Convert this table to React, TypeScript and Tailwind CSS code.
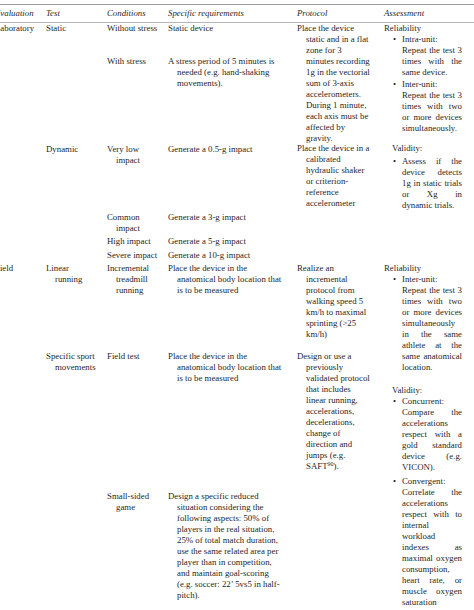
import React from "react";

const GRID = "grid grid-cols-[51px_61px_61px_129px_87px_90px]";

// cell with hanging indent: first line flush, the rest indented
function Cell({ lines, className = "" }: { lines: React.ReactNode[]; className?: string }) {
  return (
    <div className={className}>
      {lines.map((l, i) => (
        <div key={i} className={i === 0 ? "whitespace-nowrap" : "whitespace-nowrap pl-[9px]"}>
          {l}
        </div>
      ))}
    </div>
  );
}

// a line of the assessment column; "j" lines are spread edge to edge
function JLine({ text, j }: { text: string; j?: boolean }) {
  if (!j) return <div className="whitespace-nowrap">{text}</div>;
  return (
    <div className="flex justify-between whitespace-nowrap">
      {text.split(" ").map((w, i) => (
        <span key={i}>{w}</span>
      ))}
    </div>
  );
}

type L = [string, boolean?];

function Bullet({ lines, className = "" }: { lines: L[]; className?: string }) {
  return (
    <div className={"flex " + className}>
      <span className="w-[18px] pl-[9px] flex-none">•</span>
      <div className="w-[60px] flex-none">
        {lines.map(([t, j], i) => (
          <JLine key={i} text={t} j={j} />
        ))}
      </div>
    </div>
  );
}

export default function App() {
  return (
    <div className="w-[474px] h-[610px] overflow-hidden bg-white text-[#1f1f1f] text-[8.8px] leading-[11px] font-['Liberation_Serif','Times_New_Roman',serif]">
      <div className="ml-[-5px] w-[479px] pt-[4px]">
        {/* Header */}
        <div className="border-t-[1.5px] border-b border-t-[#9a9a9a] border-b-[#b5b5b5]">
          <div className={GRID + " italic pt-[3px] pb-[2.5px]"}>
            <div>Evaluation</div>
            <div>Test</div>
            <div>Conditions</div>
            <div>Specific requirements</div>
            <div>Protocol</div>
            <div>Assessment</div>
          </div>
        </div>

        {/* Body */}
        <div className={GRID + " grid-rows-[33.5px_88px_68px_24px_14px_13px_88px_140px_auto]"}>
          {/* Evaluation */}
          <Cell className="col-start-1 row-start-1" lines={["Laboratory"]} />
          <Cell className="col-start-1 row-start-7" lines={["Field"]} />

          {/* Test */}
          <Cell className="col-start-2 row-start-1" lines={["Static"]} />
          <Cell className="col-start-2 row-start-3" lines={["Dynamic"]} />
          <Cell className="col-start-2 row-start-7" lines={["Linear", "running"]} />
          <Cell className="col-start-2 row-start-8" lines={["Specific sport", "movements"]} />

          {/* Conditions */}
          <Cell className="col-start-3 row-start-1" lines={["Without stress"]} />
          <Cell className="col-start-3 row-start-2" lines={["With stress"]} />
          <Cell className="col-start-3 row-start-3" lines={["Very low", "impact"]} />
          <Cell className="col-start-3 row-start-4" lines={["Common", "impact"]} />
          <Cell className="col-start-3 row-start-5" lines={["High impact"]} />
          <Cell className="col-start-3 row-start-6" lines={["Severe impact"]} />
          <Cell className="col-start-3 row-start-7" lines={["Incremental", "treadmill", "running"]} />
          <Cell className="col-start-3 row-start-8" lines={["Field test"]} />
          <Cell className="col-start-3 row-start-9" lines={["Small-sided", "game"]} />

          {/* Specific requirements */}
          <Cell className="col-start-4 row-start-1" lines={["Static device"]} />
          <Cell
            className="col-start-4 row-start-2"
            lines={["A stress period of 5 minutes is", "needed (e.g. hand-shaking", "movements)."]}
          />
          <Cell className="col-start-4 row-start-3" lines={["Generate a 0.5-g impact"]} />
          <Cell className="col-start-4 row-start-4" lines={["Generate a 3-g impact"]} />
          <Cell className="col-start-4 row-start-5" lines={["Generate a 5-g impact"]} />
          <Cell className="col-start-4 row-start-6" lines={["Generate a 10-g impact"]} />
          <Cell
            className="col-start-4 row-start-7"
            lines={["Place the device in the", "anatomical body location that", "is to be measured"]}
          />
          <Cell
            className="col-start-4 row-start-8"
            lines={["Place the device in the", "anatomical body location that", "is to be measured"]}
          />
          <Cell
            className="col-start-4 row-start-9"
            lines={[
              "Design a specific reduced",
              "situation considering the",
              "following aspects: 50% of",
              "players in the real situation,",
              "25% of total match duration,",
              "use the same related area per",
              "player than in competition,",
              "and maintain goal-scoring",
              "(e.g. soccer: 22’ 5vs5 in half-",
              "pitch).",
            ]}
          />

          {/* Protocol */}
          <Cell
            className="col-start-5 row-start-1 row-span-2"
            lines={[
              "Place the device",
              "static and in a flat",
              "zone for 3",
              "minutes recording",
              "1g in the vectorial",
              "sum of 3-axis",
              "accelerometers.",
              "During 1 minute,",
              "each axis must be",
              "affected by",
              "gravity.",
            ]}
          />
          <Cell
            className="col-start-5 row-start-3 row-span-4 -mt-[1.5px]"
            lines={[
              "Place the device in a",
              "calibrated",
              "hydraulic shaker",
              "or criterion-",
              "reference",
              "accelerometer",
            ]}
          />
          <Cell
            className="col-start-5 row-start-7"
            lines={[
              "Realize an",
              "incremental",
              "protocol from",
              "walking speed 5",
              "km/h to maximal",
              "sprinting (>25",
              "km/h)",
            ]}
          />
          <Cell
            className="col-start-5 row-start-8 row-span-2"
            lines={[
              "Design or use a",
              "previously",
              "validated protocol",
              "that includes",
              "linear running,",
              "accelerations,",
              "decelerations,",
              "change of",
              "direction and",
              "jumps (e.g.",
              <>
                SAFT<sup className="text-[6px]">90</sup>).
              </>,
            ]}
          />

          {/* Assessment: laboratory */}
          <div className="col-start-6 row-start-1 row-span-6">
            <div>Reliability</div>
            <Bullet
              lines={[["Intra-unit:"], ["Repeat the test 3", true], ["times with the", true], ["same device."]]}
            />
            <Bullet
              className="mt-[1px]"
              lines={[
                ["Inter-unit:"],
                ["Repeat the test 3", true],
                ["times with two", true],
                ["or more devices", true],
                ["simultaneously."],
              ]}
            />
            <div className="pl-[8px] mt-[9px]">Validity:</div>
            <Bullet
              className="mt-[2px]"
              lines={[
                ["Assess if the", true],
                ["device detects", true],
                ["1g in static trials", true],
                ["or Xg in", true],
                ["dynamic trials."],
              ]}
            />
          </div>

          {/* Assessment: field */}
          <div className="col-start-6 row-start-7 row-span-3">
            <div>Reliability</div>
            <Bullet
              lines={[
                ["Inter-unit:"],
                ["Repeat the test 3", true],
                ["times with two", true],
                ["or more devices", true],
                ["simultaneously"],
                ["in the same", true],
                ["athlete at the", true],
                ["same anatomical", true],
                ["location."],
              ]}
            />
            <div className="pl-[8px] mt-[12px]">Validity:</div>
            <Bullet
              lines={[
                ["Concurrent:"],
                ["Compare the", true],
                ["accelerations"],
                ["respect with a", true],
                ["gold standard", true],
                ["device (e.g.", true],
                ["VICON)."],
              ]}
            />
            <Bullet
              className="mt-[3px]"
              lines={[
                ["Convergent:"],
                ["Correlate the", true],
                ["accelerations"],
                ["respect with to", true],
                ["internal"],
                ["workload"],
                ["indexes as", true],
                ["maximal oxygen", true],
                ["consumption,"],
                ["heart rate, or", true],
                ["muscle oxygen", true],
                ["saturation"],
                ["among others"],
              ]}
            />
          </div>
        </div>
      </div>
    </div>
  );
}
